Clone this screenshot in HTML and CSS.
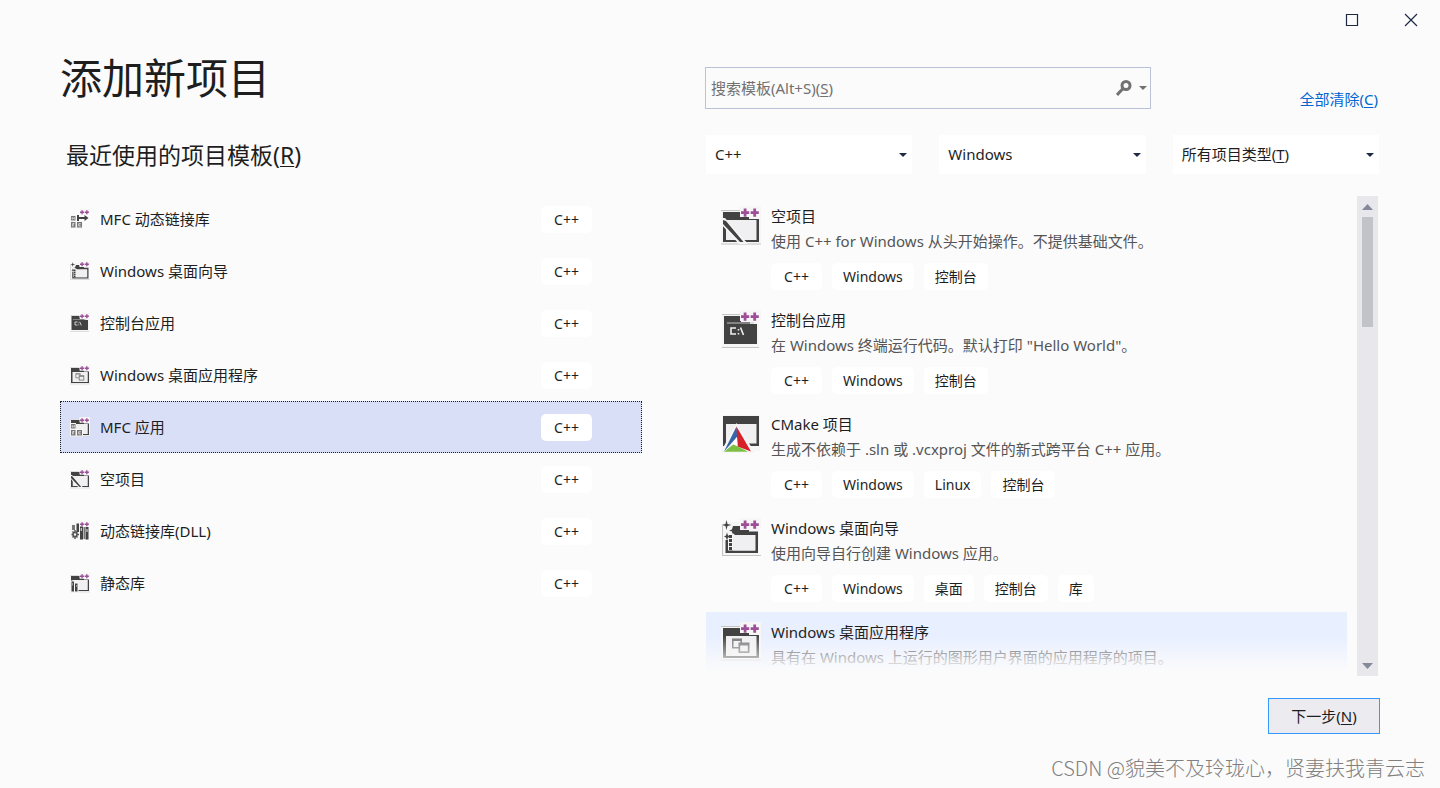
FILE: index.html
```html
<!DOCTYPE html>
<html lang="zh-CN">
<head>
<meta charset="utf-8">
<title>添加新项目</title>
<link rel="stylesheet" href="styles.css">
</head>
<body>
<svg class="sprite" aria-hidden="true">
  <symbol id="plus" viewBox="0 0 40 40">
    <path class="halo" d="M19 0h21v11H19z"/>
    <path class="violet" d="M22.700 2.500h2.800v2.700h2.700v2.800h-2.700v2.700h-2.800V8H20V5.200h2.700zM32.300 2.500h2.800v2.700h2.700V8h-2.700v2.700h-2.800V8h-2.700V5.200h2.700z"/>
  </symbol>
  <symbol id="folder" viewBox="0 0 40 40">
    <path class="halo" d="M0 4h40v34H0z"/>
    <path class="edge" d="M0 4h19v1H0zM0 37.500h40v1H0z"/>
    <path class="ink" d="M2 6h18v5h8v2h10v23H2z"/>
    <path class="pane" d="M5 14h30.500v20H5z"/>
  </symbol>
  <symbol id="box-m" viewBox="0 0 40 40">
    <path class="halo" d="M0 12h12v12h14v15H0z"/>
    <path class="grey" d="M2 14h9v9H2zM2 26h9v11H2zM14 26h10v11H14z"/>
    <path class="light-line" d="M4.500 21v-4l2 2 2-2v4M8.500 29h-3v6M5.500 32H8M21.500 29.500h-4v4.500h4"/>
  </symbol>
  <symbol id="empty" viewBox="0 0 40 40">
    <use href="#folder"/>
    <path class="halo" d="M0 12h4l23 26h-9L0 18z"/>
    <path class="ink" d="M2 14l3 1 17.500 21H19L2 18z"/>
    <path class="ink" d="M2 22l3 3v9h8l2 2H2z"/>
    <use href="#plus"/>
  </symbol>
  <symbol id="console" viewBox="0 0 40 40">
    <path class="halo" d="M1 4h37v34H1z"/>
    <path class="edge" d="M1 4h18v1H1zM1 37h37v1H1z"/>
    <path class="ink" d="M3 6h17v6h9v2h7v20H3z"/>
    <path class="edge" d="M6 12.500h27v1H6z"/>
    <path class="prompt" d="M15 18h-5v6h5M17.500 19v1.500M17.500 23v1.500M19.500 17.500l3 7.500"/>
    <use href="#plus"/>
  </symbol>
  <symbol id="cmake" viewBox="0 0 40 40">
    <path class="halo" d="M1 1h38v36H1z"/>
    <path class="ink" d="M2 2h36v30H2z"/>
    <path class="pane" d="M5 10h30.500v19.500H5z"/>
    <path class="halo" d="M15.500 9L34 39H0l3-7z"/>
    <path fill="#3465a8" d="M15.500 12.500l1 10L3 37.500z"/>
    <path fill="#d8202b" d="M15.500 12.500L30 37.500l-13.500-5z"/>
    <path fill="#7bc043" d="M3 37.800l9.500-7.500L27 37.800z"/>
    <path fill="#fff" d="M16 23l.6 9-4-1.500-2-.8z"/>
  </symbol>
  <symbol id="wizard" viewBox="0 0 40 40">
    <path class="halo" d="M2 4h36v34H2z"/>
    <path class="edge" d="M1 8h1v29h38v1H1z"/>
    <path class="ink" d="M12 8h7v4h9v1.500h9V35H4.500V22H7v10.500h27V17H14l-3-3z"/>
    <path class="pane" d="M12 17h22.500v15.500H12z"/>
    <path class="dash" d="M9.500 17v15"/>
    <path class="ink" d="M5.500 2l1 4 4 1-4 1-1 4-1-4-4-1 4-1zM12 8.500l1 3 3 1-3 1-1 3-1-3-3-1 3-1zM6 14.500l1 3 3 1-3 1-1 3-1-3-2-1 2-1z"/>
    <use href="#plus"/>
  </symbol>
  <symbol id="desktop" viewBox="0 0 40 40">
    <use href="#folder"/>
    <path class="grey" d="M11 16.500h10v10H11zM12.500 19v6h7v-6z"/>
    <path class="grey" d="M17.500 20.500h11v10.500h-11z"/>
    <path class="pane" d="M19.200 23.500h7.600v5.800h-7.600z"/>
    <use href="#plus"/>
  </symbol>
  <symbol id="mfc" viewBox="0 0 40 40">
    <use href="#folder"/>
    <use href="#box-m"/>
    <use href="#plus"/>
  </symbol>
  <symbol id="mfc-dll" viewBox="0 0 40 40">
    <use href="#box-m"/>
    <path class="ink" d="M14 12h4v4h11v-4l8 6-8 6v-4H18v4h-4z"/>
    <use href="#plus"/>
  </symbol>
  <symbol id="dll" viewBox="0 0 40 40">
    <path class="halo" d="M1 5h37v33H1z"/>
    <path class="ink" d="M13 5h5v17h-5zM20 9h6v28h-6zM31 12h6v25h-6z"/>
    <path class="grey" d="M4 8h6v10H4zM27 12h3v24h-3z"/>
    <path class="pane" d="M21.500 14h2v6h-2zM33 16h2v6h-2z"/>
    <path class="gear" d="M10 18v5M10 31v5M3 27h4M13 27h5M5 21l3 3M15 21l-3 3M5 33l3-3M15 33l-3-3"/>
    <circle class="gear" cx="10" cy="27" r="4"/>
    <use href="#plus"/>
  </symbol>
  <symbol id="static" viewBox="0 0 40 40">
    <use href="#folder"/>
    <path class="halo" d="M0 15h17v24H0z"/>
    <path class="ink" d="M3 17h5v20H3zM10 21h5v16h-5z"/>
    <path class="pane" d="M5 20h1v5H5zM12 24h1v4h-1z"/>
    <use href="#plus"/>
  </symbol>
</svg>

<div class="dialog">
  <header class="titlebar">
    <button class="win-btn" type="button" aria-label="最大化"><svg viewBox="0 0 14 14"><path d="M1.500 1.500h11v11h-11z"/></svg></button>
    <button class="win-btn" type="button" aria-label="关闭"><svg viewBox="0 0 14 14"><path d="M1 1l12 12M13 1L1 13"/></svg></button>
  </header>

  <main class="columns">
    <section class="recent">
      <h1>添加新项目</h1>
      <h2>最近使用的项目模板(<u>R</u>)</h2>
      <ul class="recent-list">
        <li class="row"><svg class="icon-sm"><use href="#mfc-dll"/></svg><span class="name">MFC 动态链接库</span><span class="tag">C++</span></li>
        <li class="row"><svg class="icon-sm"><use href="#wizard"/></svg><span class="name">Windows 桌面向导</span><span class="tag">C++</span></li>
        <li class="row"><svg class="icon-sm"><use href="#console"/></svg><span class="name">控制台应用</span><span class="tag">C++</span></li>
        <li class="row"><svg class="icon-sm"><use href="#desktop"/></svg><span class="name">Windows 桌面应用程序</span><span class="tag">C++</span></li>
        <li class="row selected"><svg class="icon-sm"><use href="#mfc"/></svg><span class="name">MFC 应用</span><span class="tag">C++</span></li>
        <li class="row"><svg class="icon-sm"><use href="#empty"/></svg><span class="name">空项目</span><span class="tag">C++</span></li>
        <li class="row"><svg class="icon-sm"><use href="#dll"/></svg><span class="name">动态链接库(DLL)</span><span class="tag">C++</span></li>
        <li class="row"><svg class="icon-sm"><use href="#static"/></svg><span class="name">静态库</span><span class="tag">C++</span></li>
      </ul>
    </section>

    <section class="browse">
      <div class="search-row">
        <div class="search">
          <input id="search" class="search-input" type="text" placeholder=" ">
          <label class="search-label" for="search">搜索模板(Alt+S)(<u>S</u>)</label>
          <button class="search-btn" type="button" aria-label="搜索">
            <svg class="lens" viewBox="0 0 16 16"><circle cx="10" cy="5.500" r="4"/><path d="M7 8.500L1 15"/></svg>
            <svg class="arrow" viewBox="0 0 8 4"><path d="M0 0h8L4 4z"/></svg>
          </button>
        </div>
        <a class="clear" href="#">全部清除(<u>C</u>)</a>
      </div>

      <div class="filters">
        <div class="filter">
          <select aria-label="语言"><option>C++</option></select>
          <svg class="arrow" viewBox="0 0 8 4"><path d="M0 0h8L4 4z"/></svg>
        </div>
        <div class="filter">
          <select aria-label="平台"><option>Windows</option></select>
          <svg class="arrow" viewBox="0 0 8 4"><path d="M0 0h8L4 4z"/></svg>
        </div>
        <div class="filter">
          <select id="type"><option></option></select>
          <label class="filter-label" for="type">所有项目类型(<u>T</u>)</label>
          <svg class="arrow" viewBox="0 0 8 4"><path d="M0 0h8L4 4z"/></svg>
        </div>
      </div>

      <div class="results">
        <div class="viewport">
          <article class="item"><svg class="icon-lg"><use href="#empty"/></svg><div class="info">
            <h3>空项目</h3><p>使用 C++ for Windows 从头开始操作。不提供基础文件。</p>
            <div class="tags"><span class="tag">C++</span><span class="tag">Windows</span><span class="tag">控制台</span></div></div></article>
          <article class="item"><svg class="icon-lg"><use href="#console"/></svg><div class="info">
            <h3>控制台应用</h3><p>在 Windows 终端运行代码。默认打印 "Hello World"。</p>
            <div class="tags"><span class="tag">C++</span><span class="tag">Windows</span><span class="tag">控制台</span></div></div></article>
          <article class="item"><svg class="icon-lg"><use href="#cmake"/></svg><div class="info">
            <h3>CMake 项目</h3><p>生成不依赖于 .sln 或 .vcxproj 文件的新式跨平台 C++ 应用。</p>
            <div class="tags"><span class="tag">C++</span><span class="tag">Windows</span><span class="tag">Linux</span><span class="tag">控制台</span></div></div></article>
          <article class="item"><svg class="icon-lg"><use href="#wizard"/></svg><div class="info">
            <h3>Windows 桌面向导</h3><p>使用向导自行创建 Windows 应用。</p>
            <div class="tags"><span class="tag">C++</span><span class="tag">Windows</span><span class="tag">桌面</span><span class="tag">控制台</span><span class="tag">库</span></div></div></article>
          <article class="item hover"><svg class="icon-lg"><use href="#desktop"/></svg><div class="info">
            <h3>Windows 桌面应用程序</h3><p>具有在 Windows 上运行的图形用户界面的应用程序的项目。</p></div></article>
        </div>
        <div class="scrollbar">
          <svg class="scroll-arrow" viewBox="0 0 11 6"><path d="M0 6h11L5.500 0z"/></svg>
          <div class="track"><div class="thumb"></div></div>
          <svg class="scroll-arrow" viewBox="0 0 11 6"><path d="M0 0h11L5.500 6z"/></svg>
        </div>
      </div>

      <button class="next" type="button">下一步(<u>N</u>)</button>
    </section>
  </main>
  <div class="watermark">CSDN @貌美不及玲珑心，贤妻扶我青云志</div>
</div>
</body>
</html>
```
FILE: styles.css
```css
* { box-sizing: border-box; }

body {
  margin: 0;
  background: #fbfbfc;
  color: #1e1e1e;
  font: 15px/25px "Noto Sans", "Noto Sans CJK SC", sans-serif;
}

h1, h2, h3, p, ul { margin: 0; padding: 0; font-weight: 400; }
button, input, select { font: inherit; color: inherit; }
u { text-underline-offset: 2px; text-decoration-thickness: 1px; }
svg { display: block; flex: none; }
.sprite { display: none; }

.halo { fill: #f6f6f6; }
.edge { fill: #c4c4c4; }
.ink { fill: #424242; }
.pane { fill: #f0eff1; }
.violet { fill: #9b4f96; }
.grey { fill: #777; fill-rule: evenodd; }
.light-line { fill: none; stroke: #f6f6f6; stroke-width: 1.5; }
.dash { fill: none; stroke: #424242; stroke-width: 3; stroke-dasharray: 3 1; }
.gear { fill: none; stroke: #555; stroke-width: 3; }
.prompt { fill: none; stroke: #f0eff1; stroke-width: 1.6; }

.dialog {
  position: relative;
  display: flex;
  flex-direction: column;
  height: 100vh;
  min-height: 640px;
}

.titlebar { display: flex; justify-content: flex-end; height: 40px; }
.win-btn {
  display: grid;
  place-items: center;
  width: 60px;
  border: 0;
  background: none;
}
.win-btn svg { width: 14px; height: 14px; fill: none; stroke: #1e2a44; stroke-width: 1.2; }
.titlebar .win-btn:last-child { width: 58px; }

.columns {
  flex: 1;
  min-height: 0;
  display: grid;
  grid-template-columns: minmax(0, 582fr) minmax(0, 675fr);
  grid-template-rows: minmax(0, 1fr);
  column-gap: 63px;
  padding: 0 60px 54px;
}

h1 { font-size: 42px; line-height: 76px; }
h2 { padding: 24px 0 22px 6px; font-size: 23px; line-height: 31px; }

.recent-list { list-style: none; }
.row {
  display: flex;
  align-items: center;
  gap: 10px;
  height: 52px;
  padding: 0 49px 0 9px;
  border: 1px solid transparent;
}
.row.selected { background: #dadff8; border: 1px dotted #1e1e1e; }
.name { flex: 1; }
.icon-sm { width: 20px; height: 20px; }

.tag {
  min-width: 51px;
  padding: 0 11px;
  border-radius: 5px;
  background: #fff;
  font-size: 14px;
  line-height: 27px;
  text-align: center;
}
.tags .tag:nth-child(n + 3) { min-width: 0; }

.browse { display: flex; flex-direction: column; padding-top: 27px; }
.search-row { display: flex; justify-content: space-between; padding-right: 2px; }
.search { position: relative; flex: 0 0 446px; height: 42px; }
.search-input {
  width: 100%;
  height: 100%;
  padding: 0 50px 0 5px;
  border: 1px solid #b9c2d6;
  background: transparent;
  outline: 0;
}
.search-label {
  position: absolute;
  left: 6px;
  top: 9px;
  color: #717171;
  pointer-events: none;
}
.search-input:not(:placeholder-shown) + .search-label { display: none; }
.search-btn {
  position: absolute;
  right: 4px;
  top: 1px;
  display: flex;
  align-items: center;
  gap: 7px;
  height: 40px;
  padding: 0;
  border: 0;
  background: none;
}
.lens { width: 16px; height: 16px; fill: none; stroke: #717171; stroke-width: 3; }
.arrow { width: 8px; height: 4px; fill: #1e2a44; }
.search-btn .arrow { fill: #717171; }
.clear { margin-top: 20px; color: #0066d1; text-decoration: none; }

.filters {
  display: grid;
  grid-template-columns: repeat(3, minmax(0, 1fr));
  gap: 27px;
  margin: 23px 1px 22px;
}
.filter { position: relative; height: 39px; }
.filter select {
  appearance: none;
  width: 100%;
  height: 100%;
  padding: 0 24px 0 9px;
  border: 0;
  background: #fff;
}
.filter .arrow { position: absolute; right: 5px; top: 18px; pointer-events: none; }
.filter-label { position: absolute; left: 9px; top: 7px; pointer-events: none; }

.results { flex: 1; min-height: 0; display: flex; gap: 10px; padding: 0 2px 0 1px; }
.viewport { position: relative; flex: 1; overflow: hidden; }
.viewport::after {
  content: "";
  position: absolute;
  inset: auto 0 0;
  height: 40px;
  background: linear-gradient(rgba(251, 251, 252, 0), #fbfbfc 88%);
}
.item { display: flex; gap: 10px; height: 104px; padding: 8px 0 10px 15px; }
.item.hover { background: #e8efff; }
.icon-lg { width: 40px; height: 40px; margin-top: 2px; }
h3 { font-size: 15px; }
.item p { color: #555; white-space: nowrap; }
.tags { display: flex; gap: 10px; margin-top: 9px; }

.scrollbar {
  display: flex;
  flex-direction: column;
  align-items: center;
  gap: 7px;
  width: 21px;
  padding: 8px 5px 7px;
  background: #e7e7ec;
}
.scroll-arrow { width: 11px; height: 6px; fill: #868999; }
.track { flex: 1; align-self: stretch; }
.thumb { height: 25%; background: #c2c3c9; }

.next {
  align-self: flex-end;
  width: 112px;
  height: 36px;
  margin-top: 22px;
  padding: 0;
  border: 1px solid #3399ff;
  background: #ececf0;
}

.watermark {
  position: absolute;
  right: 15px;
  bottom: 5px;
  color: #808080;
  font: 300 20px/30px "Noto Sans CJK TC", sans-serif;
}
```
